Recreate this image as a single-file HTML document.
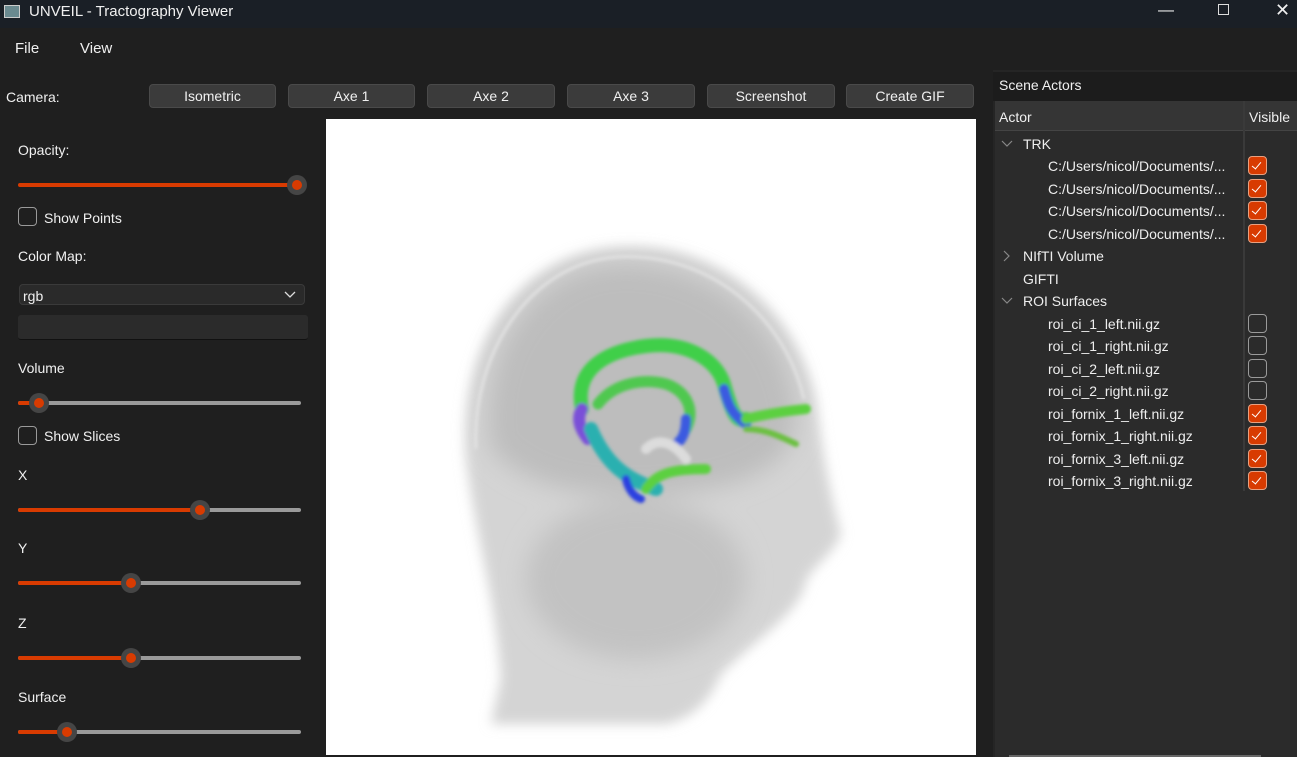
<!DOCTYPE html>
<html><head><style>
*{box-sizing:border-box;margin:0;padding:0}
body{width:1297px;height:757px;background:#1f1f1f;font-family:"Liberation Sans",sans-serif;color:#f0f0f0;position:relative;overflow:hidden;font-size:14px}
.a{position:absolute;white-space:nowrap}
.btn{position:absolute;top:84px;height:24px;background:#3b3b3b;border:1px solid #4a4a4a;border-radius:4px;text-align:center;line-height:22px;font-size:14px}
.track{position:absolute;height:4px;background:#9a9a9a;border-radius:2px}
.fill{position:absolute;height:4px;background:#d83b01;border-radius:2px}
.knob{position:absolute;width:20px;height:20px;border-radius:50%;background:#454545;}
.knob:after{content:"";position:absolute;left:5px;top:5px;width:10px;height:10px;border-radius:50%;background:#d83b01}
.cb{position:absolute;width:19px;height:19px;border:1px solid #9a9a9a;border-radius:4px}
.ck{position:absolute;width:19px;height:19px;border-radius:4px;background:#d83b01;border:1px solid #e8a080}
.ck:after{content:"";position:absolute;left:5px;top:3px;width:4px;height:8px;border:solid #fff;border-width:0 1.5px 1.5px 0;transform:rotate(40deg)}
.row{position:absolute;font-size:14px;color:#eee}
</style></head><body>
<div class="a" style="left:0;top:0;width:1297px;height:28px;background:#1a1f26"></div>
<div class="a" style="left:4px;top:5px;width:16px;height:13px;background:#6a8a90;border:1px solid #ccc"></div>
<div class="a" style="left:29px;top:3px;font-size:15px">UNVEIL - Tractography Viewer</div>
<div class="a" style="left:1158px;top:2px;font-size:16px">&#8212;</div>
<div class="a" style="left:1218px;top:4px;width:11px;height:11px;border:1px solid #ddd"></div>
<div class="a" style="left:1275px;top:0px;font-size:18px">&#10005;</div>
<div class="a" style="left:15px;top:40px;font-size:15px">File</div>
<div class="a" style="left:80px;top:40px;font-size:15px">View</div>
<div class="a" style="left:6px;top:89px">Camera:</div>
<div class="btn" style="left:149px;width:127px">Isometric</div>
<div class="btn" style="left:288px;width:127px">Axe 1</div>
<div class="btn" style="left:427px;width:128px">Axe 2</div>
<div class="btn" style="left:567px;width:128px">Axe 3</div>
<div class="btn" style="left:707px;width:128px">Screenshot</div>
<div class="btn" style="left:846px;width:128px">Create GIF</div>

<div class="a" style="left:18px;top:142px">Opacity:</div>
<div class="fill" style="left:18px;top:183px;width:280px"></div><div class="knob" style="left:287px;top:175px"></div>
<div class="cb" style="left:18px;top:207px"></div><div class="a" style="left:44px;top:210px">Show Points</div>
<div class="a" style="left:18px;top:248px">Color Map:</div>
<div class="a" style="left:19px;top:284px;width:286px;height:21px;background:#2a2a2a;border:1px solid #3a3a3a;border-radius:4px"></div>
<div class="a" style="left:23px;top:288px">rgb</div>
<svg class="a" style="left:284px;top:291px" width="12" height="8"><path d="M1 1 L6 6 L11 1" stroke="#ddd" fill="none" stroke-width="1.3"/></svg>
<div class="a" style="left:18px;top:315px;width:290px;height:25px;background:#2b2b2b;border-bottom:1px solid #111;border-radius:3px"></div>
<div class="a" style="left:18px;top:360px">Volume</div>
<div class="track" style="left:18px;top:401px;width:283px"></div><div class="fill" style="left:18px;top:401px;width:22px"></div><div class="knob" style="left:29px;top:393px"></div>
<div class="cb" style="left:18px;top:426px"></div><div class="a" style="left:44px;top:428px">Show Slices</div>
<div class="a" style="left:18px;top:467px">X</div>
<div class="track" style="left:18px;top:508px;width:283px"></div><div class="fill" style="left:18px;top:508px;width:183px"></div><div class="knob" style="left:190px;top:500px"></div>
<div class="a" style="left:18px;top:540px">Y</div>
<div class="track" style="left:18px;top:581px;width:283px"></div><div class="fill" style="left:18px;top:581px;width:114px"></div><div class="knob" style="left:121px;top:573px"></div>
<div class="a" style="left:18px;top:615px">Z</div>
<div class="track" style="left:18px;top:656px;width:283px"></div><div class="fill" style="left:18px;top:656px;width:114px"></div><div class="knob" style="left:121px;top:648px"></div>
<div class="a" style="left:18px;top:689px">Surface</div>
<div class="track" style="left:18px;top:730px;width:283px"></div><div class="fill" style="left:18px;top:730px;width:50px"></div><div class="knob" style="left:57px;top:722px"></div>

<div class="a" style="left:326px;top:119px;width:650px;height:636px;background:#fff;overflow:hidden">
<svg width="650" height="636" viewBox="0 0 650 636">
<defs><filter id="b"><feGaussianBlur stdDeviation="6"/></filter><filter id="b3"><feGaussianBlur stdDeviation="12"/></filter><filter id="b2"><feGaussianBlur stdDeviation="1.5"/></filter></defs>
<g filter="url(#b)">
<path d="M175 560 C170 480 150 420 140 340 C130 230 190 135 290 128 C390 120 470 190 490 280 C495 320 500 360 515 415 C505 440 480 450 478 470 C465 500 430 520 395 555 C380 590 360 600 340 605 L165 605 Z" fill="#d4d4d4"/>
</g>
<g filter="url(#b3)">
<path d="M165 330 C150 240 200 150 290 145 C380 140 460 200 470 290 C475 340 430 360 380 370 C300 380 210 380 165 330Z" fill="#bdbdbd"/>
<ellipse cx="310" cy="460" rx="110" ry="80" fill="#c2c2c2"/>
</g>
<path d="M150 330 C145 240 200 145 290 138 C385 132 460 200 478 280" stroke="#e2e2e2" stroke-width="3" fill="none" filter="url(#b2)"/>
<g filter="url(#b2)" fill="none" stroke-linecap="round">
<path d="M256 290 C248 250 280 232 320 227 C360 222 390 240 398 265 C405 290 410 305 420 300" stroke="#3fcf4a" stroke-width="14"/>
<path d="M256 290 C250 300 254 310 262 320" stroke="#7a4fd8" stroke-width="12"/>
<path d="M398 270 C402 285 405 295 420 305" stroke="#3a5ae0" stroke-width="10"/>
<path d="M420 300 C440 295 460 292 480 290" stroke="#5cd040" stroke-width="10"/>
<path d="M420 310 C440 310 455 318 470 325" stroke="#6ac040" stroke-width="6"/>
<path d="M272 285 C290 262 320 260 340 265 C360 272 370 290 360 310" stroke="#50c850" stroke-width="11"/>
<path d="M360 300 C360 315 355 322 350 325" stroke="#3a5ae0" stroke-width="10"/>
<path d="M265 310 C280 345 300 360 330 370" stroke="#2ab0b0" stroke-width="14"/>
<path d="M320 370 C330 355 345 350 380 350" stroke="#5cd040" stroke-width="10"/>
<path d="M300 360 C302 370 308 378 315 380" stroke="#2a40e0" stroke-width="8"/>
<path d="M320 330 C330 320 345 320 360 340" stroke="#dcdcdc" stroke-width="10"/>
</g>
</svg></div>

<div class="a" style="left:993px;top:70px;width:304px;height:687px;background:#252525"></div>
<div class="a" style="left:993px;top:72px;width:304px;height:29px;background:#1c1c1c"></div>
<div class="a" style="left:999px;top:77px">Scene Actors</div>
<div class="a" style="left:995px;top:101px;width:302px;height:656px;background:#2b2b2b"></div>
<div class="a" style="left:995px;top:101px;width:302px;height:30px;background:#353535;border-bottom:1px solid #444"></div>
<div class="a" style="left:1243px;top:101px;width:2px;height:390px;background:#3a3a3a"></div>
<div class="a" style="left:999px;top:109px">Actor</div>
<div class="a" style="left:1249px;top:109px">Visible</div>
<svg class="a" style="left:1001px;top:140px" width="12" height="8"><path d="M1 1 L6 6 L11 1" stroke="#888" fill="none" stroke-width="1.2"/></svg>
<div class="row" style="left:1023px;top:136px">TRK</div>
<div class="row" style="left:1048px;top:158px">C:/Users/nicol/Documents/...</div><div class="ck" style="left:1248px;top:156px"></div>
<div class="row" style="left:1048px;top:181px">C:/Users/nicol/Documents/...</div><div class="ck" style="left:1248px;top:179px"></div>
<div class="row" style="left:1048px;top:203px">C:/Users/nicol/Documents/...</div><div class="ck" style="left:1248px;top:201px"></div>
<div class="row" style="left:1048px;top:226px">C:/Users/nicol/Documents/...</div><div class="ck" style="left:1248px;top:224px"></div>
<svg class="a" style="left:1003px;top:250px" width="8" height="12"><path d="M1 1 L6 6 L1 11" stroke="#888" fill="none" stroke-width="1.2"/></svg>
<div class="row" style="left:1023px;top:248px">NIfTI Volume</div>
<div class="row" style="left:1023px;top:271px">GIFTI</div>
<svg class="a" style="left:1001px;top:297px" width="12" height="8"><path d="M1 1 L6 6 L11 1" stroke="#888" fill="none" stroke-width="1.2"/></svg>
<div class="row" style="left:1023px;top:293px">ROI Surfaces</div>
<div class="row" style="left:1048px;top:316px">roi_ci_1_left.nii.gz</div><div class="cb" style="left:1248px;top:314px"></div>
<div class="row" style="left:1048px;top:338px">roi_ci_1_right.nii.gz</div><div class="cb" style="left:1248px;top:336px"></div>
<div class="row" style="left:1048px;top:361px">roi_ci_2_left.nii.gz</div><div class="cb" style="left:1248px;top:359px"></div>
<div class="row" style="left:1048px;top:383px">roi_ci_2_right.nii.gz</div><div class="cb" style="left:1248px;top:381px"></div>
<div class="row" style="left:1048px;top:406px">roi_fornix_1_left.nii.gz</div><div class="ck" style="left:1248px;top:404px"></div>
<div class="row" style="left:1048px;top:428px">roi_fornix_1_right.nii.gz</div><div class="ck" style="left:1248px;top:426px"></div>
<div class="row" style="left:1048px;top:451px">roi_fornix_3_left.nii.gz</div><div class="ck" style="left:1248px;top:449px"></div>
<div class="row" style="left:1048px;top:473px">roi_fornix_3_right.nii.gz</div><div class="ck" style="left:1248px;top:471px"></div>
<div class="a" style="left:1009px;top:755px;width:252px;height:2px;background:#666"></div>
</body></html>
